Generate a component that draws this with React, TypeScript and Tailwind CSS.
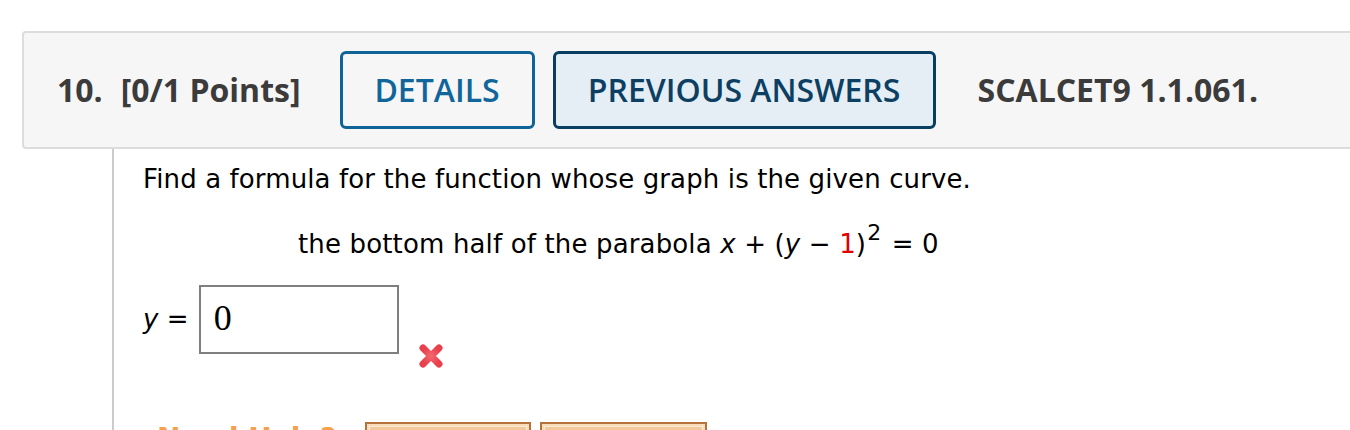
import React from "react";

function RedX() {
  return (
    <svg width="26" height="26" viewBox="0 0 26 26">
      <defs>
        <radialGradient id="rx" cx="50%" cy="50%" r="60%">
          <stop offset="0%" stopColor="#f26a72" />
          <stop offset="100%" stopColor="#e8404c" />
        </radialGradient>
      </defs>
      <path d="M5 5 L21 21 M21 5 L5 21" stroke="url(#rx)" strokeWidth="7" strokeLinecap="round" fill="none" />
    </svg>
  );
}

export default function App() {
  const body = { fontFamily: '"DejaVu Sans", Verdana, sans-serif' };
  const head = { fontFamily: '"Open Sans", "DejaVu Sans", sans-serif' };
  return (
    <div className="w-[1350px] h-[430px] overflow-hidden bg-white">
      <div className="pt-[31px] pl-[22px]">
        <div
          className="h-[118px] w-[1360px] border-2 border-[#dcdcdc] rounded-[4px] bg-[#f6f6f6] flex items-center pl-[33px] text-[32px] text-[#3b3b3b]"
          style={head}
        >
          <span className="font-bold">10.</span>
          <span className="font-bold ml-[18px]">[0/1 Points]</span>
          <div className="ml-[39px] w-[195px] h-[78px] border-[3px] border-[#0f6396] rounded-[6px] flex items-center justify-center text-[#10659a] font-semibold">
            DETAILS
          </div>
          <div className="ml-[18px] w-[383px] h-[78px] border-[3px] border-[#0a3e60] rounded-[6px] bg-[#e5eef5] flex items-center justify-center text-[#0c3f62] font-semibold">
            PREVIOUS ANSWERS
          </div>
          <span className="font-bold ml-[42px]">SCALCET9 1.1.061.</span>
        </div>
      </div>
      <div className="ml-[112px] border-l-2 border-[#cccccc] pl-[29px] pt-[15px] h-[300px] text-[26px] leading-[30px] text-black" style={body}>
        <div className="tracking-[0.12px]">Find a formula for the function whose graph is the given curve.</div>
        <div className="mt-[35px] ml-[155px] whitespace-nowrap tracking-[0.15px]">
          the bottom half of the parabola <i>x</i> + (<i>y</i> − <span className="text-[#e00000]">1</span>)
          <sup className="text-[22px] relative top-[-13px] ml-[1px] mr-[2px]">2</sup> = 0
        </div>
        <div className="mt-[26px] flex items-start">
          <div className="mt-[19px] whitespace-pre">
            <i>y</i> ={" "}
          </div>
          <div className="ml-[2px] w-[200px] h-[69px] border-2 border-[#7f7f7f] pt-[11px] pl-[13px] text-[36px] leading-[40px]" style={{ fontFamily: '"Liberation Serif", "Times New Roman", serif' }}>
            0
          </div>
          <div className="ml-[19px] mt-[58px]">
            <RedX />
          </div>
        </div>
        <div className="mt-[53px] flex items-start">
          <span className="ml-[14px] mt-[2px] font-bold text-[28px] text-[#f5a04c]">Need Help?</span>
          <div className="ml-[28px] w-[166px] h-[40px] border-2 border-[#b3733a] bg-[#f9dcb8] p-[2px]">
            <div className="w-full h-full border border-[#fdebd6] bg-[#f3c89a] text-[20px] text-center">Read It</div>
          </div>
          <div className="ml-[9px] w-[167px] h-[40px] border-2 border-[#b3733a] bg-[#f9dcb8] p-[2px]">
            <div className="w-full h-full border border-[#fdebd6] bg-[#f3c89a] text-[20px] text-center">Watch It</div>
          </div>
        </div>
      </div>
    </div>
  );
}
